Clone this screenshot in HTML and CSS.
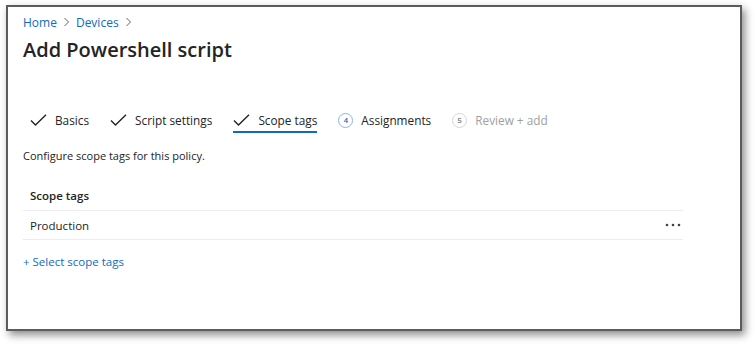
FILE: index.html
```html
<!DOCTYPE html>
<html>
<head>
<meta charset="utf-8">
<link rel="stylesheet" href="styles.css">
</head>
<body>
<div class="frame">
  <nav class="crumbs">
    <a class="crumb">Home</a>
    <span class="sep"><svg width="7" height="10" viewBox="0 0 7 10"><path d="M1.5 1 L5.5 5 L1.5 9" fill="none" stroke="#666" stroke-width="1"/></svg></span>
    <a class="crumb">Devices</a>
    <span class="sep"><svg width="7" height="10" viewBox="0 0 7 10"><path d="M1.5 1 L5.5 5 L1.5 9" fill="none" stroke="#666" stroke-width="1"/></svg></span>
  </nav>
  <h1 class="title">Add Powershell script</h1>

  <div class="tabs">
    <div class="tab done">
      <svg class="check" width="17" height="12" viewBox="0 0 17 12"><path d="M1 6.5 L5.5 11 L16 0.8" fill="none" stroke="#222" stroke-width="1.4"/></svg>
      <span>Basics</span>
    </div>
    <div class="tab done">
      <svg class="check" width="17" height="12" viewBox="0 0 17 12"><path d="M1 6.5 L5.5 11 L16 0.8" fill="none" stroke="#222" stroke-width="1.4"/></svg>
      <span>Script settings</span>
    </div>
    <div class="tab done active">
      <svg class="check" width="17" height="12" viewBox="0 0 17 12"><path d="M1 6.5 L5.5 11 L16 0.8" fill="none" stroke="#222" stroke-width="1.4"/></svg>
      <span>Scope tags</span>
    </div>
    <div class="tab">
      <span class="num blue">4</span>
      <span>Assignments</span>
    </div>
    <div class="tab disabled">
      <span class="num">5</span>
      <span>Review + add</span>
    </div>
  </div>

  <p class="desc">Configure scope tags for this policy.</p>

  <div class="table">
    <div class="row head"><span>Scope tags</span></div>
    <div class="row"><span>Production</span><svg class="more" width="16" height="4" viewBox="0 0 16 4"><circle cx="2" cy="2" r="1.3" fill="#444"/><circle cx="8" cy="2" r="1.3" fill="#444"/><circle cx="14" cy="2" r="1.3" fill="#444"/></svg></div>
  </div>

  <a class="add">+ Select scope tags</a>
</div>
</body>
</html>
```

FILE: styles.css
```css
* { box-sizing: border-box; }
html, body { margin: 0; padding: 0; background: #fff; }
body {
  font-family: "Open Sans", "Noto Sans", sans-serif;
  color: #242424;
  width: 755px;
  height: 348px;
  overflow: hidden;
}
.frame {
  margin: 5px 0 0 6px;
  width: 736px;
  height: 326px;
  border: 2px solid #5c5c5c;
  box-shadow: 3px 4px 8px rgba(0, 0, 0, 0.45);
  padding: 7px 0 0 15px;
  background: #fff;
}
.crumbs {
  display: flex;
  align-items: center;
  height: 16px;
  font-size: 12px;
}
.crumb { color: #0f6cbd; }
.sep { display: flex; align-items: center; margin: 0 6px 0 6px; }
.title {
  margin: 7px 0 0;
  font-size: 20px;
  font-weight: 600;
  color: #242424;
  line-height: 26px;
  letter-spacing: 0;
}
.tabs {
  display: flex;
  margin: 44px 0 0 7px;
  font-size: 11.8px;
}
.tab {
  display: flex;
  align-items: center;
  gap: 8px;
  height: 26px;
  margin-right: 21px;
  border-bottom: 2px solid transparent;
  padding-top: 2px;
}
.tab.active { border-bottom-color: #0f6cbd; }
.tab.disabled { color: #a0a0a0; }
.check { display: block; }
.num {
  width: 15px;
  height: 15px;
  border-radius: 50%;
  border: 1px solid #d6d6d6;
  font-size: 7.5px;
  font-weight: 600;
  display: flex;
  align-items: center;
  justify-content: center;
  color: #777;
}
.num.blue { border-color: #8ab4e6; color: #0f6cbd; }
.desc {
  margin: 15px 0 0;
  font-size: 11px;
  line-height: 16px;
}
.table {
  margin-top: 17px;
  width: 660px;
  font-size: 11.5px;
}
.row {
  display: flex;
  align-items: center;
  justify-content: space-between;
  height: 29px;
  padding: 0 2px 0 7px;
  border-bottom: 1px solid #ececec;
}
.row.head { font-weight: 600; height: 30px; }
.more { display: block; }
.add {
  display: block;
  margin-top: 14px;
  color: #0f6cbd;
  font-size: 11.5px;
}
```
